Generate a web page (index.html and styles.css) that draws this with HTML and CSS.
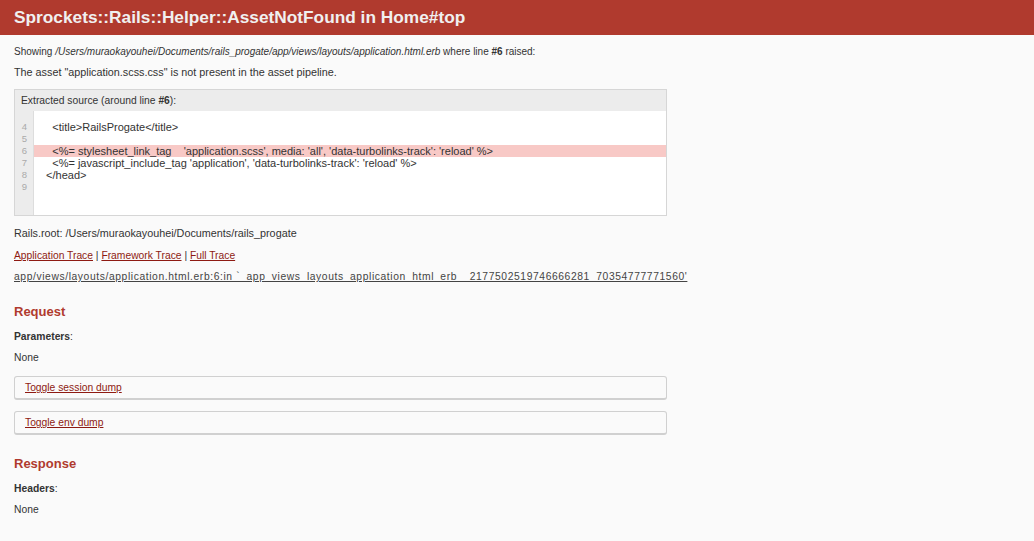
FILE: index.html
```html
<!DOCTYPE html>
<html lang="en">
<head>
    <meta charset="UTF-8">
    <title>Action Controller: Exception caught</title>
    <link rel="stylesheet" href="styles.css">
</head>
<body>
    <header>
        <h1>Sprockets::Rails::Helper::AssetNotFound in Home#top</h1>
    </header>

    <div id="container">
        <p class="first">
            Showing <i>/Users/muraokayouhei/Documents/rails_progate/app/views/layouts/application.html.erb</i> where line <b>#6</b> raised:
        </p>
        <p class="message">The asset "application.scss.css" is not present in the asset pipeline.</p>

        <div class="source">
            <div class="info">Extracted source (around line <strong>#6</strong>):</div>
            <div class="data">
                <pre class="line-numbers">4
5
6
7
8
9</pre>
                <div class="code">
<pre class="line">    &lt;title&gt;RailsProgate&lt;/title&gt;</pre>
<pre class="line"> </pre>
<pre class="line active">    &lt;%= stylesheet_link_tag    'application.scss', media: 'all', 'data-turbolinks-track': 'reload' %&gt;</pre>
<pre class="line">    &lt;%= javascript_include_tag 'application', 'data-turbolinks-track': 'reload' %&gt;</pre>
<pre class="line">  &lt;/head&gt;</pre>
<pre class="line"> </pre>
                </div>
            </div>
        </div>

        <p class="root">Rails.root: /Users/muraokayouhei/Documents/rails_progate</p>
        <p class="traces">
            <a href="#">Application Trace</a> |
            <a href="#">Framework Trace</a> |
            <a href="#">Full Trace</a>
        </p>
        <p><a href="#" class="trace-frame">app/views/layouts/application.html.erb:6:in `_app_views_layouts_application_html_erb__2177502519746666281_70354777771560'</a></p>

        <h2>Request</h2>
        <p class="label"><b>Parameters</b>:</p>
        <p>None</p>

        <div class="details">
            <a href="#" class="summary">Toggle session dump</a>
        </div>
        <div class="details">
            <a href="#" class="summary">Toggle env dump</a>
        </div>

        <h2>Response</h2>
        <p class="label"><b>Headers</b>:</p>
        <p>None</p>
    </div>
</body>
</html>
```

FILE: styles.css
```css
body {
    background-color: #fafafa;
    color: #333;
    margin: 0;
}
body, p, pre, td {
    font-family: "Liberation Sans", Helvetica, Arial, sans-serif;
    font-size: 10.3px;
    line-height: 12px;
}
header {
    color: #f0f0f0;
    background: #b03a2e;
    padding: 0 14px;
    height: 35px;
    display: flex;
    align-items: center;
}
h1 {
    margin: 0;
    font-size: 17.3px;
    line-height: 19px;
}
#container {
    padding: 11px 14px 0;
}
p {
    margin: 0 0 9px;
}
a {
    color: #8e1a12;
}
a.trace-frame {
    color: #444;
    letter-spacing: 0.6px;
}
h2 {
    color: #b03a2e;
    font-size: 13px;
    line-height: 16px;
    margin: 21px 0 11px;
}
.first {
    margin-bottom: 8px;
    font-size: 10px;
}
.message,
.root {
    font-size: 10.8px;
}
.source {
    border: 1px solid #d6d6d6;
    background: #ececec;
    width: 651px;
    margin: 11px 0;
}
.info {
    height: 21px;
    line-height: 21px;
    padding: 0 6px;
}
.data {
    display: flex;
    background: #fff;
    height: 104px;
}
.data pre {
    margin: 0;
}
.line-numbers {
    width: 12px;
    padding: 10px 6px 0 0;
    background: #ececec;
    color: #aaa;
    font-size: 9.5px;
    text-align: right;
    border-right: 1px solid #ddd;
}
.code {
    flex: 1;
    padding-top: 10px;
}
.line {
    padding-left: 6px;
    font-size: 11px;
    white-space: pre;
}
.line.active {
    background-color: #f8c9c6;
}
.root {
    margin-bottom: 11px;
}
.details {
    border: 1px solid #d0d0d0;
    border-bottom-width: 2px;
    border-radius: 3px;
    width: 651px;
    margin: 12px 0 0;
}
.details + .details {
    margin-top: 11px;
}
.summary {
    display: block;
    padding: 5px 10px 4px;
}
```
